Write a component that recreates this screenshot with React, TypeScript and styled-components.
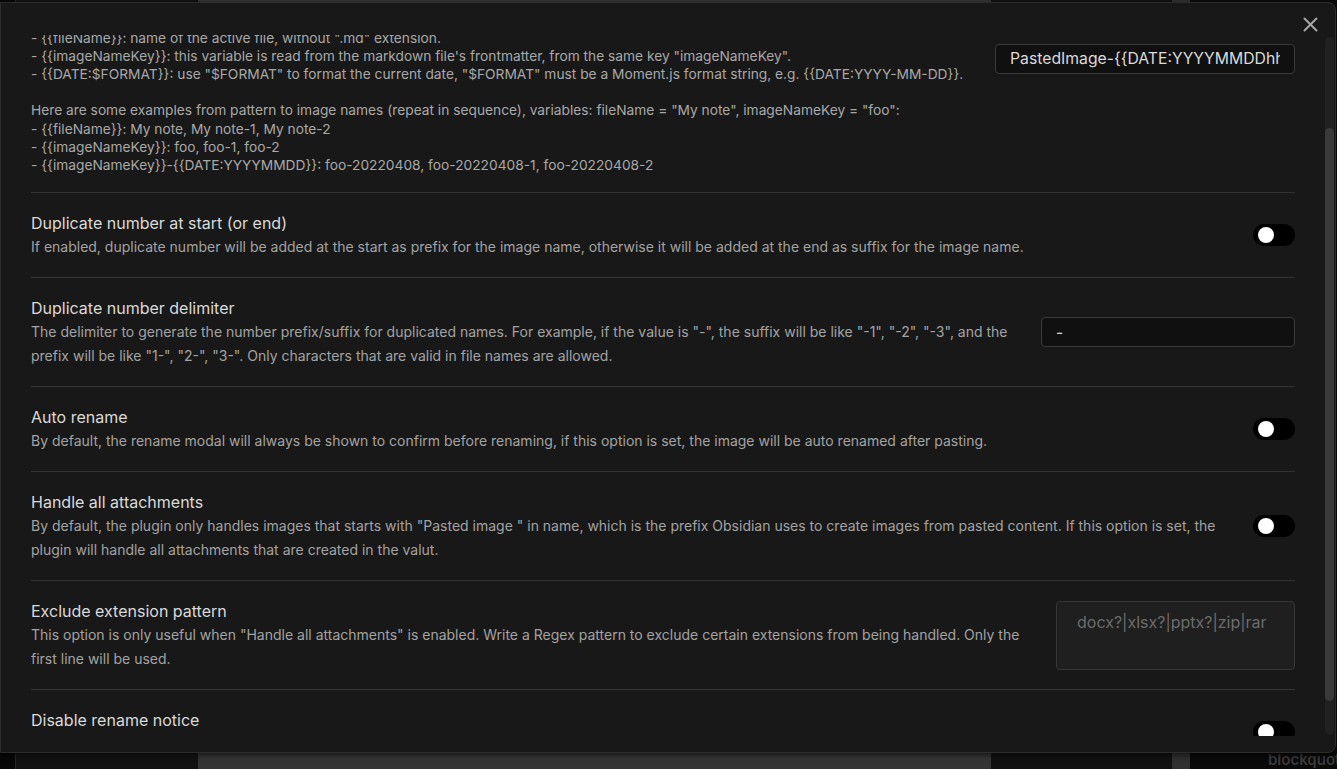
import React, { useLayoutEffect, useRef } from 'react';
import styled, { createGlobalStyle } from 'styled-components';

const GlobalStyle = createGlobalStyle`
  html, body {
    margin: 0;
    padding: 0;
    background: #0b0b0b;
    overflow: hidden;
    font-family: Inter, "Noto Sans", "Liberation Sans", sans-serif;
  }
  * {
    box-sizing: border-box;
  }
`;

const Workspace = styled.div`
  display: flex;
  height: 100vh;
  width: 100vw;
`;

const Pane = styled.div<{ $width?: number; $bg: string }>`
  flex: ${({ $width }) => ($width ? `0 0 ${$width}px` : '1 1 auto')};
  background: ${({ $bg }) => $bg};
  display: flex;
  align-items: flex-end;
  overflow: hidden;
`;

const SidebarPane = styled(Pane)`
  border-left: 1px solid #262626;
`;

const GhostText = styled.div`
  padding: 0 0 0 78px;
  font-size: 15px;
  font-weight: 600;
  color: #3b3b3b;
  line-height: 19px;
  white-space: nowrap;
`;

const Modal = styled.div`
  position: absolute;
  top: 2px;
  left: 0;
  width: 1336px;
  height: 751px;
  background: #181818;
  border: 1px solid #2c2c2c;
  border-radius: 0 8px 8px 0;
  display: flex;
  flex-direction: column;
  padding: 32px 0 16px 0;
  box-shadow: 0 2px 6px rgba(0, 0, 0, 0.6);
`;

const CloseButton = styled.button`
  position: absolute;
  top: 11px;
  right: 15px;
  width: 20px;
  height: 20px;
  padding: 0;
  border: none;
  background: transparent;
  display: flex;
  align-items: center;
  justify-content: center;
  cursor: pointer;
`;

const ScrollArea = styled.div`
  flex: 1 1 auto;
  overflow: hidden;
  padding: 0 40px 0 30px;
`;

const ScrollTrack = styled.div`
  position: absolute;
  top: 34px;
  right: 1px;
  width: 9px;
  height: 698px;
  border-radius: 5px;
  background: #212121;
`;

const ScrollThumb = styled.div`
  position: absolute;
  left: 0;
  right: 0;
  border-radius: 5px;
  background: #3a3a3a;
`;

const SettingItem = styled.div`
  display: flex;
  align-items: center;
  padding: 18px 0;
  border-top: 1px solid #333333;

  &:first-child {
    border-top: none;
  }
`;

const SettingInfo = styled.div`
  flex: 1 1 0;
  min-width: 0;
  margin-right: 16px;
`;

const SettingName = styled.div`
  font-size: 16px;
  line-height: 24px;
  color: #dadada;
`;

const SettingDescription = styled.div`
  font-size: 14px;
  line-height: 24px;
  color: #a3a3a3;
`;

const PatternDescription = styled.div`
  margin-top: 7px;
  font-size: 13.75px;
  line-height: 18.2px;
  color: #a8a8a8;
  white-space: pre-line;
`;

const SettingControl = styled.div`
  flex: 0 0 auto;
  display: flex;
  justify-content: flex-end;
  align-items: center;
`;

const TextInput = styled.input<{ $width: number }>`
  width: ${({ $width }) => $width}px;
  height: 30px;
  padding: 0 14px;
  background: #101010;
  border: 1px solid #3a3a3a;
  border-radius: 4px;
  color: #dadada;
  font-family: inherit;
  font-size: 15.75px;
  outline: none;
`;

const TextArea = styled.textarea`
  width: 239px;
  height: 69px;
  padding: 9px 20px;
  background: #1f1f1f;
  border: 1px solid #363636;
  border-radius: 4px;
  color: #dadada;
  font-family: inherit;
  font-size: 16px;
  line-height: 22px;
  resize: none;
  outline: none;

  &::placeholder {
    color: #6c6c6c;
  }
`;

const Toggle = styled.div<{ $on?: boolean }>`
  position: relative;
  width: 42px;
  height: 22px;
  border-radius: 11px;
  background: ${({ $on }) => ($on ? '#7f6df2' : '#000000')};

  &::after {
    content: '';
    position: absolute;
    top: 3px;
    left: ${({ $on }) => ($on ? '22px' : '5px')};
    width: 16px;
    height: 16px;
    border-radius: 50%;
    background: #ffffff;
  }
`;

const patternText = `The pattern indicates how the new name should be generated.

Available variables:
- {{fileName}}: name of the active file, without ".md" extension.
- {{imageNameKey}}: this variable is read from the markdown file's frontmatter, from the same key "imageNameKey".
- {{DATE:$FORMAT}}: use "$FORMAT" to format the current date, "$FORMAT" must be a Moment.js format string, e.g. {{DATE:YYYY-MM-DD}}.

Here are some examples from pattern to image names (repeat in sequence), variables: fileName = "My note", imageNameKey = "foo":
- {{fileName}}: My note, My note-1, My note-2
- {{imageNameKey}}: foo, foo-1, foo-2
- {{imageNameKey}}-{{DATE:YYYYMMDD}}: foo-20220408, foo-20220408-1, foo-20220408-2`;

interface ToggleSetting {
  name: string;
  desc: string;
}

const Setting: React.FC<{ name: string; desc: string; children: React.ReactNode }> = ({
  name,
  desc,
  children,
}) => (
  <SettingItem>
    <SettingInfo>
      <SettingName>{name}</SettingName>
      <SettingDescription>{desc}</SettingDescription>
    </SettingInfo>
    <SettingControl>{children}</SettingControl>
  </SettingItem>
);

const duplicateAtStart: ToggleSetting = {
  name: 'Duplicate number at start (or end)',
  desc: 'If enabled, duplicate number will be added at the start as prefix for the image name, otherwise it will be added at the end as suffix for the image name.',
};

const autoRename: ToggleSetting = {
  name: 'Auto rename',
  desc: 'By default, the rename modal will always be shown to confirm before renaming, if this option is set, the image will be auto renamed after pasting.',
};

const handleAll: ToggleSetting = {
  name: 'Handle all attachments',
  desc: 'By default, the plugin only handles images that starts with "Pasted image " in name, which is the prefix Obsidian uses to create images from pasted content. If this option is set, the plugin will handle all attachments that are created in the valut.',
};

const disableNotice: ToggleSetting = {
  name: 'Disable rename notice',
  desc: "Turn off this option if you don't want to see the notice when renaming images.",
};

const App: React.FC = () => {
  const scrollRef = useRef<HTMLDivElement>(null);

  useLayoutEffect(() => {
    if (scrollRef.current) scrollRef.current.scrollTop = 110;
  }, []);

  return (
    <>
      <GlobalStyle />
      <Workspace>
        <Pane $width={15} $bg="#080808" />
        <SidebarPane $width={183} $bg="#121212" />
        <Pane $width={793} $bg="#353535" />
        <Pane $width={181} $bg="#111111" />
        <Pane $width={18} $bg="#303030" />
        <Pane $bg="#0a0a0a">
          <GhostText>blockquote</GhostText>
        </Pane>
      </Workspace>

      <Modal>
        <CloseButton aria-label="Close">
          <svg width="15" height="15" viewBox="0 0 15 15">
            <path d="M1.5 1.5 L13.5 13.5 M13.5 1.5 L1.5 13.5" stroke="#a6a6a6" strokeWidth="2" strokeLinecap="round" />
          </svg>
        </CloseButton>

        <ScrollArea ref={scrollRef}>
          <SettingItem>
            <SettingInfo>
              <SettingName>Image name pattern</SettingName>
              <PatternDescription>{patternText}</PatternDescription>
            </SettingInfo>
            <SettingControl>
              <TextInput $width={300} defaultValue="PastedImage-{{DATE:YYYYMMDDhhmmss}}" />
            </SettingControl>
          </SettingItem>

          <Setting {...duplicateAtStart}>
            <Toggle />
          </Setting>

          <Setting
            name="Duplicate number delimiter"
            desc={'The delimiter to generate the number prefix/suffix for duplicated names. For example, if the value is "-", the suffix will be like "-1", "-2", "-3", and the prefix will be like "1-", "2-", "3-". Only characters that are valid in file names are allowed.'}
          >
            <TextInput $width={254} defaultValue="-" />
          </Setting>

          <Setting {...autoRename}>
            <Toggle />
          </Setting>

          <Setting {...handleAll}>
            <Toggle />
          </Setting>

          <Setting
            name="Exclude extension pattern"
            desc={'This option is only useful when "Handle all attachments" is enabled. Write a Regex pattern to exclude certain extensions from being handled. Only the first line will be used.'}
          >
            <TextArea placeholder="docx?|xlsx?|pptx?|zip|rar" />
          </Setting>

          <Setting {...disableNotice}>
            <Toggle />
          </Setting>
        </ScrollArea>

        <ScrollTrack>
          <ScrollThumb style={{ top: 91, height: 573 }} />
        </ScrollTrack>
      </Modal>
    </>
  );
};

export default App;
